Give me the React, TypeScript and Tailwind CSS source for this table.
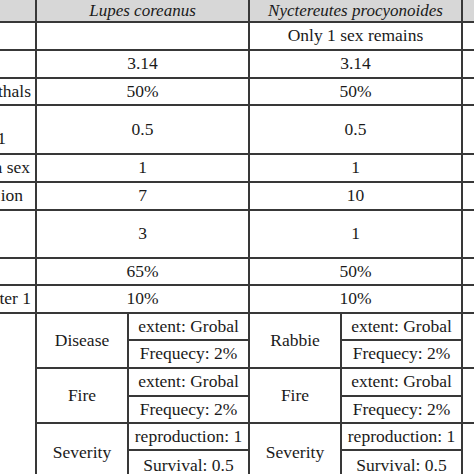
function Cell({ children, className = "" }: { children?: React.ReactNode; className?: string }) {
  return (
    <div className={`flex items-center justify-center overflow-hidden whitespace-nowrap bg-white text-[17.5px] leading-none text-[#1a1a1a] ${className}`}>
      {children}
    </div>
  );
}

function Head({ children, className = "" }: { children?: React.ReactNode; className?: string }) {
  return (
    <div className={`flex items-center justify-center overflow-hidden whitespace-nowrap bg-[#d7d7d7] text-[17px] italic leading-none text-[#1a1a1a] ${className}`}>
      {children}
    </div>
  );
}

// label column is cut off at the left edge, so only word endings show
function Label({ text, pr, className = "" }: { text?: string; pr: string; className?: string }) {
  return <Cell className={`justify-end ${pr} ${className}`}>{text}</Cell>;
}

const rows: { label?: string; pr: string; a: string; b: string; extra?: string }[] = [
  { pr: "pr-1", a: "", b: "Only 1 sex remains" },
  { pr: "pr-1", a: "3.14", b: "3.14" },
  { label: "thals", pr: "pr-[4px]", a: "50%", b: "50%" },
  { label: "l 1", pr: "pr-[29px]", a: "0.5", b: "0.5", extra: "items-end pb-[6px]" },
  { label: "a sex", pr: "pr-[5px]", a: "1", b: "1" },
  { label: "ion", pr: "pr-[12px]", a: "7", b: "10" },
  { pr: "pr-1", a: "3", b: "1" },
  { pr: "pr-1", a: "65%", b: "50%" },
  { label: "ter 1", pr: "pr-[4px]", a: "10%", b: "10%" },
];

const events = [
  { a: "Disease", b: "Rabbie", top: "extent: Grobal", bottom: "Frequecy: 2%" },
  { a: "Fire", b: "Fire", top: "extent: Grobal", bottom: "Frequecy: 2%" },
  { a: "Severity", b: "Severity", top: "reproduction: 1", bottom: "Survival: 0.5" },
];

export default function App() {
  return (
    <div className="h-[474px] w-[474px] overflow-hidden bg-white font-['Liberation_Serif',serif]">
      <div className="grid w-max grid-cols-[35px_90px_119px_90px_119px_40px] grid-rows-[21px_26px_26px_25px_47px_26px_26px_46px_25px_26px_25px_26px_26px_25px_25px_30px] gap-[2px] bg-[#383838]">
        <Head />
        <Head className="col-span-2">Lupes coreanus</Head>
        <Head className="col-span-2">Nyctereutes procyonoides</Head>
        <Head />

        {rows.map((r, i) => (
          <div key={i} className="contents">
            <Label text={r.label} pr={r.pr} className={r.extra} />
            <Cell className="col-span-2">{r.a}</Cell>
            <Cell className="col-span-2">{r.b}</Cell>
            <Cell />
          </div>
        ))}

        <Cell className="row-span-6" />
        {events.map((e, i) => (
          <div key={i} className="contents">
            <Cell className="row-span-2">{e.a}</Cell>
            <Cell>{e.top}</Cell>
            <Cell className="row-span-2">{e.b}</Cell>
            <Cell>{e.top}</Cell>
            <Cell className="row-span-2" />
            <Cell>{e.bottom}</Cell>
            <Cell>{e.bottom}</Cell>
          </div>
        ))}
      </div>
    </div>
  );
}
